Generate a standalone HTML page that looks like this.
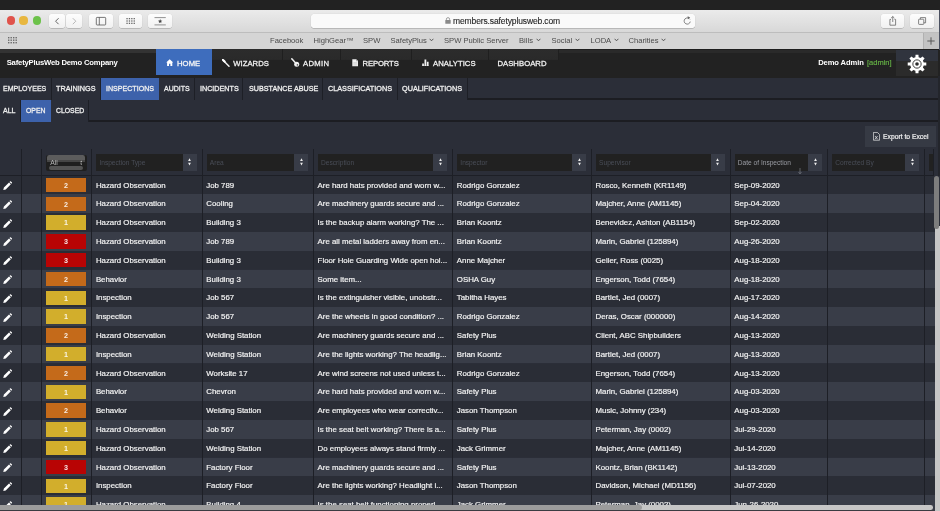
<!DOCTYPE html><html><head><meta charset="utf-8"><title>Inspections</title><style>
*{box-sizing:border-box;margin:0;padding:0}
html,body{width:940px;height:511px;overflow:hidden;background:#2b2e38}
body{position:relative;will-change:transform;font-family:"Liberation Sans",sans-serif;font-size:8px;color:#fff}
.a{position:absolute}
.t{position:absolute;white-space:nowrap;line-height:10px;height:10px}
#top{left:0;top:0;width:940px;height:9.5px;background:#222}
#tb{left:0;top:9.5px;width:940px;height:23px;background:linear-gradient(#ebebeb,#d8d8d8);border-bottom:.5px solid #bdbdbd}
#bm{left:0;top:32.5px;width:940px;height:16.5px;background:#d5d5d5}
.btn{position:absolute;background:linear-gradient(#fdfdfd,#f1f1f1);border-radius:2.5px;box-shadow:0 .5px .5px rgba(0,0,0,.28),0 0 0 .3px rgba(0,0,0,.08)}
.tl{position:absolute;width:8.2px;height:8.2px;border-radius:50%;top:16.4px}
.bk{position:absolute;top:35.5px;font-size:7.6px;color:#4a4a4a;white-space:nowrap;line-height:10px}
#hd{left:0;top:49px;width:940px;height:28.5px;background:#222}
.ht{position:absolute;top:49px;height:26.3px;background:linear-gradient(#2c2c2c 0,#2a2a2a 10.3px,#222 11.5px)}
.hx{position:absolute;top:58.6px;font-size:7.7px;letter-spacing:.05px;color:#f2f2f2;white-space:nowrap;line-height:10px;-webkit-text-stroke:.28px #f2f2f2}
.n2{position:absolute;top:77.8px;height:21.8px;border-right:1px solid #1d1f26;background:#2b2e38}
.n2 span,.n3 span{position:absolute;top:6.4px;font-size:7.6px;line-height:10px;white-space:nowrap;color:#f0f0f0;-webkit-text-stroke:.3px #f0f0f0;transform:scaleX(.928);transform-origin:0 50%}
.n3{position:absolute;top:100.2px;height:21.5px;border-right:1px solid #1d1f26;background:#2b2e38}
.act{background:#3d62ab;border-right-color:#3d62ab}
.ln{position:absolute;background:#1d1f26}
.row{position:absolute;left:0;width:935px;height:18.8px}
.c{position:absolute;white-space:nowrap;font-size:7.85px;line-height:10px;margin-top:.9px;color:#f4f4f4;-webkit-text-stroke:.18px #f4f4f4}
.bd{position:absolute;left:45.9px;width:40.3px;height:14.4px;text-align:center;font-weight:bold;font-size:7.2px;line-height:15.2px;color:rgba(255,255,255,.88)}
.in{position:absolute;top:153.8px;height:16.8px;background:#212121}
.sb{position:absolute;top:153.8px;height:16.8px;width:14.2px;background:#383c47}
.ph{position:absolute;top:157.6px;font-size:6.6px;line-height:10px;color:#494d57;white-space:nowrap}
</style></head><body>
<div id="top" class="a"></div><div id="tb" class="a"></div><div id="bm" class="a"></div>
<div class="tl" style="left:6.5px;background:#e0534b"></div>
<div class="tl" style="left:19.4px;background:#e8b740"></div>
<div class="tl" style="left:32.5px;background:#6cc24a"></div>
<div class="btn" style="left:49px;top:13.6px;width:16.2px;height:14.4px"><svg class="a" style="left:0;top:0" width="16.2" height="14.4" viewBox="0 0 16.2 14.4"><path d="M9.6 4.2 L6.6 7.2 L9.6 10.2" fill="none" stroke="#555" stroke-width="0.9"/></svg></div>
<div class="btn" style="left:66px;top:13.6px;width:16.2px;height:14.4px"><svg class="a" style="left:0;top:0" width="16.2" height="14.4" viewBox="0 0 16.2 14.4"><path d="M6.8 4.2 L9.8 7.2 L6.8 10.2" fill="none" stroke="#b0b0b0" stroke-width="0.9"/></svg></div>
<div class="btn" style="left:89px;top:13.6px;width:24px;height:14.4px"><svg class="a" style="left:0;top:0" width="24" height="14.4" viewBox="0 0 24 14.4"><rect x="7.3" y="3.4" width="9.4" height="7.6" rx="0.8" fill="none" stroke="#555" stroke-width="0.8"/><path d="M10.3 3.4V11" stroke="#555" stroke-width="0.8"/></svg></div>
<div class="btn" style="left:118.7px;top:13.6px;width:23.6px;height:14.4px"><svg class="a" style="left:0;top:0" width="23.6" height="14.4" viewBox="0 0 23.6 14.4"><rect x="7.4" y="4.0" width="1.3" height="1.3" fill="#666"/><rect x="7.4" y="6.35" width="1.3" height="1.3" fill="#666"/><rect x="7.4" y="8.7" width="1.3" height="1.3" fill="#666"/><rect x="9.8" y="4.0" width="1.3" height="1.3" fill="#666"/><rect x="9.8" y="6.35" width="1.3" height="1.3" fill="#666"/><rect x="9.8" y="8.7" width="1.3" height="1.3" fill="#666"/><rect x="12.2" y="4.0" width="1.3" height="1.3" fill="#666"/><rect x="12.2" y="6.35" width="1.3" height="1.3" fill="#666"/><rect x="12.2" y="8.7" width="1.3" height="1.3" fill="#666"/><rect x="14.6" y="4.0" width="1.3" height="1.3" fill="#666"/><rect x="14.6" y="6.35" width="1.3" height="1.3" fill="#666"/><rect x="14.6" y="8.7" width="1.3" height="1.3" fill="#666"/></svg></div>
<div class="btn" style="left:147.7px;top:13.6px;width:24.3px;height:14.4px"><svg class="a" style="left:0;top:0" width="24.3" height="14.4" viewBox="0 0 24.3 14.4"><path d="M6.5 3.6H17.8M6.5 10.9H17.8" stroke="#666" stroke-width="0.7"/><polygon points="12.15,5.05 12.71,6.58 14.34,6.64 13.05,7.64 13.50,9.21 12.15,8.30 10.80,9.21 11.25,7.64 9.96,6.64 11.59,6.58" fill="#444"/></svg></div>
<div class="btn" style="left:311.3px;top:13.8px;width:383.7px;height:14.2px;background:#fafafa"></div>
<svg class="a" style="left:444.5px;top:17.4px" width="6" height="7" viewBox="0 0 6 7"><rect x="0.3" y="3" width="5.4" height="3.8" rx="0.5" fill="#8a8a8a"/><path d="M1.4 3.2V2.2a1.6 1.6 0 0 1 3.2 0V3.2" fill="none" stroke="#8a8a8a" stroke-width="0.8"/></svg>
<div class="t" style="left:453px;top:15.6px;font-size:8.5px;color:#262626;letter-spacing:-.12px;-webkit-text-stroke:.12px #262626">members.safetyplusweb.com</div>
<svg class="a" style="left:683.3px;top:16.3px" width="8.4" height="8.8" viewBox="0 0 8.4 8.8"><path d="M6.9 3.4A3.1 3.1 0 1 0 7.3 5.6" fill="none" stroke="#666" stroke-width="0.8"/><path d="M4.6 0.2 L7.2 1.5 L4.9 3.3Z" fill="#666"/></svg>
<div class="btn" style="left:880.8px;top:13.8px;width:23.5px;height:13.8px"><svg class="a" style="left:0;top:0" width="23.5" height="13.8" viewBox="0 0 23.5 13.8"><path d="M10 5.4H8.9V11.2H14.6V5.4H13.5" fill="none" stroke="#666" stroke-width="0.8"/><path d="M11.75 8V2.6M10.1 4.1L11.75 2.5L13.4 4.1" fill="none" stroke="#666" stroke-width="0.8"/></svg></div>
<div class="btn" style="left:910px;top:13.8px;width:23.8px;height:13.8px"><svg class="a" style="left:0;top:0" width="23.8" height="13.8" viewBox="0 0 23.8 13.8"><rect x="8.6" y="5.2" width="5.2" height="5.2" rx="0.6" fill="none" stroke="#666" stroke-width="0.8"/><path d="M10.4 5.2V3.6H15.6V8.8H13.8" fill="none" stroke="#666" stroke-width="0.8"/></svg></div>
<svg class="a" style="left:7.6px;top:37.2px" width="10" height="7" viewBox="0 0 10 7"><rect x="0.0" y="0.0" width="1.4" height="1.4" fill="#6a6a6a"/><rect x="0.0" y="2.5" width="1.4" height="1.4" fill="#6a6a6a"/><rect x="0.0" y="5.0" width="1.4" height="1.4" fill="#6a6a6a"/><rect x="2.5" y="0.0" width="1.4" height="1.4" fill="#6a6a6a"/><rect x="2.5" y="2.5" width="1.4" height="1.4" fill="#6a6a6a"/><rect x="2.5" y="5.0" width="1.4" height="1.4" fill="#6a6a6a"/><rect x="5.0" y="0.0" width="1.4" height="1.4" fill="#6a6a6a"/><rect x="5.0" y="2.5" width="1.4" height="1.4" fill="#6a6a6a"/><rect x="5.0" y="5.0" width="1.4" height="1.4" fill="#6a6a6a"/><rect x="7.5" y="0.0" width="1.4" height="1.4" fill="#6a6a6a"/><rect x="7.5" y="2.5" width="1.4" height="1.4" fill="#6a6a6a"/><rect x="7.5" y="5.0" width="1.4" height="1.4" fill="#6a6a6a"/></svg>
<div class="bk" style="left:270px">Facebook</div>
<div class="bk" style="left:313.5px">HighGear™</div>
<div class="bk" style="left:363px">SPW</div>
<div class="bk" style="left:390.5px">SafetyPlus<svg width="5" height="4" viewBox="0 0 5 4" style="margin-left:2.6px;vertical-align:0.6px"><path d="M0.6 0.8L2.5 2.8L4.4 0.8" fill="none" stroke="#4a4a4a" stroke-width="0.9"/></svg></div>
<div class="bk" style="left:444px">SPW Public Server</div>
<div class="bk" style="left:519px">Bills<svg width="5" height="4" viewBox="0 0 5 4" style="margin-left:2.6px;vertical-align:0.6px"><path d="M0.6 0.8L2.5 2.8L4.4 0.8" fill="none" stroke="#4a4a4a" stroke-width="0.9"/></svg></div>
<div class="bk" style="left:551.5px">Social<svg width="5" height="4" viewBox="0 0 5 4" style="margin-left:2.6px;vertical-align:0.6px"><path d="M0.6 0.8L2.5 2.8L4.4 0.8" fill="none" stroke="#4a4a4a" stroke-width="0.9"/></svg></div>
<div class="bk" style="left:590.5px">LODA<svg width="5" height="4" viewBox="0 0 5 4" style="margin-left:2.6px;vertical-align:0.6px"><path d="M0.6 0.8L2.5 2.8L4.4 0.8" fill="none" stroke="#4a4a4a" stroke-width="0.9"/></svg></div>
<div class="bk" style="left:628.5px">Charities<svg width="5" height="4" viewBox="0 0 5 4" style="margin-left:2.6px;vertical-align:0.6px"><path d="M0.6 0.8L2.5 2.8L4.4 0.8" fill="none" stroke="#4a4a4a" stroke-width="0.9"/></svg></div>
<div class="a" style="left:923.4px;top:32.8px;width:16.6px;height:16.2px;background:#c3c3c3;border-left:.5px solid #b0b0b0"></div>
<svg class="a" style="left:927.2px;top:37.2px" width="8" height="8" viewBox="0 0 8 8"><path d="M4 0.3V7.7M0.3 4H7.7" stroke="#555" stroke-width="0.95"/></svg>
<div id="hd" class="a"></div>
<div class="a" style="left:0;top:49px;width:155.6px;height:3.6px;background:#333"></div>
<div class="ht" style="left:212px;width:70.5px;"></div><div class="a" style="left:281.5px;top:49px;width:1.2px;height:10.5px;background:#1f1f1f"></div>
<div class="ht" style="left:282.5px;width:58.5px;"></div><div class="a" style="left:340px;top:49px;width:1.2px;height:10.5px;background:#1f1f1f"></div>
<div class="ht" style="left:341px;width:70.5px;"></div><div class="a" style="left:410.5px;top:49px;width:1.2px;height:10.5px;background:#1f1f1f"></div>
<div class="ht" style="left:411.5px;width:77.30000000000001px;"></div><div class="a" style="left:487.8px;top:49px;width:1.2px;height:10.5px;background:#1f1f1f"></div>
<div class="ht" style="left:488.8px;width:69.99999999999994px;"></div><div class="a" style="left:557.8px;top:49px;width:1.2px;height:10.5px;background:#1f1f1f"></div>
<div class="a" style="left:155.6px;top:49px;width:56.4px;height:26.3px;background:#3e6dbd"></div>
<div class="t" style="left:6.7px;top:57.6px;font-weight:bold;font-size:7.7px;letter-spacing:-.2px;color:#fff">SafetyPlusWeb Demo Company</div>
<svg class="a" style="left:165.6px;top:58.8px" width="7.4" height="7.4" viewBox="0 0 7.4 7.4"><path d="M3.7 0.2L0.2 3.5H1.1V7.2H3V4.8H4.4V7.2H6.3V3.5H7.2Z" fill="#fff"/></svg>
<div class="hx" style="left:177px;color:#fff">HOME</div>
<svg class="a" style="left:221.8px;top:58.6px" width="8" height="8" viewBox="0 0 8 8"><path d="M1.6 1.8L7 7.2" stroke="#f2f2f2" stroke-width="1.5" stroke-linecap="round"/><path d="M0.6 0.6L2.6 2.6" stroke="#fff" stroke-width="2.1" stroke-linecap="round"/></svg>
<div class="hx" style="left:233.2px">WIZARDS</div>
<svg class="a" style="left:291px;top:58.2px" width="9" height="9" viewBox="0 0 9 9"><circle cx="5.7" cy="6.2" r="2.5" fill="#f2f2f2"/><circle cx="6.4" cy="6.9" r="0.8" fill="#555"/><path d="M0.8 0.8L4.6 5" stroke="#f2f2f2" stroke-width="1.5" stroke-linecap="round"/></svg>
<div class="hx" style="left:303px;letter-spacing:.3px">ADMIN</div>
<svg class="a" style="left:351.8px;top:59px" width="6.6" height="7.5" viewBox="0 0 7 8"><path d="M0.3 0.2H4.4L6.7 2.5V7.8H0.3Z" fill="#f2f2f2"/><path d="M1.4 3.8H5.6M1.4 5.1H5.6M1.4 6.4H5.6" stroke="#bbb" stroke-width="0.5"/><path d="M4.4 0.2V2.5H6.7" fill="#aaa"/></svg>
<div class="hx" style="left:362.5px;letter-spacing:-.12px">REPORTS</div>
<svg class="a" style="left:422px;top:59px" width="7.2" height="7.2" viewBox="0 0 7.2 7.2"><path d="M0.2 4.4H1.9V7H0.2ZM2.5 0.4H4.3V7H2.5ZM4.9 2.8H6.6V7H4.9Z" fill="#f2f2f2"/><path d="M0 7H7.2" stroke="#f2f2f2" stroke-width="0.5"/></svg>
<div class="hx" style="left:433px">ANALYTICS</div>
<div class="hx" style="left:497.4px">DASHBOARD</div>
<div class="t" style="left:818.2px;top:57.6px;font-weight:bold;font-size:7.6px;letter-spacing:-.1px;color:#fff">Demo Admin</div>
<div class="t" style="left:867px;top:57.6px;font-size:7.5px;color:#66b346;-webkit-text-stroke:.15px #66b346">[admin]</div>
<div class="a" style="left:559px;top:49.8px;width:337px;height:3.5px;background:#2a2a2a"></div>
<div class="a" style="left:895.9px;top:50px;width:42px;height:25.6px;background:linear-gradient(#30343e 0,#30343e 11.3px,#2b2b2b 11.4px)"></div>
<div class="a" style="left:559px;top:49px;width:381px;height:1px;background:#1e1e1e"></div>
<svg class="a" style="left:906.8px;top:53.6px" width="20" height="20" viewBox="0 0 20 20"><path d="M8.53 0.72L11.47 0.72L11.61 3.29L13.61 4.12L15.53 2.40L17.60 4.47L15.88 6.39L16.71 8.39L19.28 8.53L19.28 11.47L16.71 11.61L15.88 13.61L17.60 15.53L15.53 17.60L13.61 15.88L11.61 16.71L11.47 19.28L8.53 19.28L8.39 16.71L6.39 15.88L4.47 17.60L2.40 15.53L4.12 13.61L3.29 11.61L0.72 11.47L0.72 8.53L3.29 8.39L4.12 6.39L2.40 4.47L4.47 2.40L6.39 4.12L8.39 3.29Z" fill="#fff"/><circle cx="10" cy="10" r="4.15" fill="none" stroke="#2b2b2b" stroke-width="0.9"/><circle cx="10" cy="10" r="1.8" fill="#2b2b2b"/></svg>
<div class="ln" style="left:0;top:97.7px;width:940px;height:1.9px;background:#1c1d22"></div>
<div class="n2" style="left:0px;width:51.5px"><span style="left:3px;transform:scaleX(0.923)">EMPLOYEES</span></div>
<div class="n2" style="left:51.5px;width:49.0px"><span style="left:4.700000000000003px;transform:scaleX(0.955)">TRAININGS</span></div>
<div class="n2 act" style="left:100.5px;width:58.80000000000001px"><span style="left:5.200000000000003px;transform:scaleX(0.932)">INSPECTIONS</span></div>
<div class="n2" style="left:159.3px;width:35.89999999999998px"><span style="left:4.899999999999977px;transform:scaleX(0.923)">AUDITS</span></div>
<div class="n2" style="left:195.2px;width:48.0px"><span style="left:4.800000000000011px;transform:scaleX(0.946)">INCIDENTS</span></div>
<div class="n2" style="left:243.2px;width:80.0px"><span style="left:5.5px;transform:scaleX(0.945)">SUBSTANCE ABUSE</span></div>
<div class="n2" style="left:323.2px;width:74.40000000000003px"><span style="left:4.800000000000011px;transform:scaleX(0.956)">CLASSIFICATIONS</span></div>
<div class="n2" style="left:397.6px;width:70.09999999999997px"><span style="left:4.399999999999977px;transform:scaleX(0.957)">QUALIFICATIONS</span></div>
<div class="ln" style="left:88.8px;top:119.7px;width:851.2px;height:1.9px;background:#1c1d22"></div>
<div class="n3" style="left:0px;width:20.8px"><span style="left:3px;top:5.9px;transform:scaleX(0.928)">ALL</span></div>
<div class="n3 act" style="left:20.8px;width:30.2px"><span style="left:5.199999999999999px;top:5.9px;transform:scaleX(0.905)">OPEN</span></div>
<div class="n3" style="left:51px;width:37.900000000000006px"><span style="left:4.5px;top:5.9px;transform:scaleX(0.904)">CLOSED</span></div>
<div class="a" style="left:865.2px;top:126.3px;width:70.7px;height:21.2px;background:#363a44"></div>
<svg class="a" style="left:872.6px;top:132.4px" width="7" height="8.6" viewBox="0 0 7 8.6"><path d="M0.4 0.4H4.4L6.6 2.6V8.2H0.4Z" fill="none" stroke="#f0f0f0" stroke-width="0.7"/><path d="M2 4L4.6 7.2M4.6 4L2 7.2" stroke="#f0f0f0" stroke-width="0.7"/></svg>
<div class="t" style="left:882.6px;top:131.5px;font-size:7.35px;-webkit-text-stroke:.2px #f4f4f4;transform:scaleX(.92);transform-origin:0 50%;color:#f4f4f4">Export to Excel</div>
<div class="row" style="top:175.5px;background:#2a2d36">
<svg class="a" style="left:3px;top:5.6px" width="9.3" height="9.3" viewBox="0 0 10.2 10.2"><path d="M0.3 9.9L1 7.2L6.6 1.6L8.6 3.6L3 9.2Z M7.2 1L7.9 0.4Q8.3 0.1 8.7 0.5L9.7 1.5Q10.1 1.9 9.8 2.3L9.2 3Z" fill="#fff"/></svg>
<div class="bd" style="top:2.4px;background:#c46a1a">2</div>
<div class="c" style="left:95.9px;top:4.3px">Hazard Observation</div>
<div class="c" style="left:206.3px;top:4.3px">Job 789</div>
<div class="c" style="left:317.6px;top:4.3px">Are hard hats provided and worn w...</div>
<div class="c" style="left:456.8px;top:4.3px">Rodrigo Gonzalez</div>
<div class="c" style="left:595.5px;top:4.3px">Rosco, Kenneth (KR1149)</div>
<div class="c" style="left:734.3px;top:4.3px">Sep-09-2020</div>
</div>
<div class="row" style="top:194.3px;background:#393d48">
<svg class="a" style="left:3px;top:5.6px" width="9.3" height="9.3" viewBox="0 0 10.2 10.2"><path d="M0.3 9.9L1 7.2L6.6 1.6L8.6 3.6L3 9.2Z M7.2 1L7.9 0.4Q8.3 0.1 8.7 0.5L9.7 1.5Q10.1 1.9 9.8 2.3L9.2 3Z" fill="#fff"/></svg>
<div class="bd" style="top:2.4px;background:#c46a1a">2</div>
<div class="c" style="left:95.9px;top:4.3px">Hazard Observation</div>
<div class="c" style="left:206.3px;top:4.3px">Cooling</div>
<div class="c" style="left:317.6px;top:4.3px">Are machinery guards secure and ...</div>
<div class="c" style="left:456.8px;top:4.3px">Rodrigo Gonzalez</div>
<div class="c" style="left:595.5px;top:4.3px">Majcher, Anne (AM1145)</div>
<div class="c" style="left:734.3px;top:4.3px">Sep-04-2020</div>
</div>
<div class="row" style="top:213.1px;background:#2a2d36">
<svg class="a" style="left:3px;top:5.6px" width="9.3" height="9.3" viewBox="0 0 10.2 10.2"><path d="M0.3 9.9L1 7.2L6.6 1.6L8.6 3.6L3 9.2Z M7.2 1L7.9 0.4Q8.3 0.1 8.7 0.5L9.7 1.5Q10.1 1.9 9.8 2.3L9.2 3Z" fill="#fff"/></svg>
<div class="bd" style="top:2.4px;background:#d2ae2c">1</div>
<div class="c" style="left:95.9px;top:4.3px">Hazard Observation</div>
<div class="c" style="left:206.3px;top:4.3px">Building 3</div>
<div class="c" style="left:317.6px;top:4.3px">Is the backup alarm working? The ...</div>
<div class="c" style="left:456.8px;top:4.3px">Brian Koontz</div>
<div class="c" style="left:595.5px;top:4.3px">Benevidez, Ashton (AB1154)</div>
<div class="c" style="left:734.3px;top:4.3px">Sep-02-2020</div>
</div>
<div class="row" style="top:231.9px;background:#393d48">
<svg class="a" style="left:3px;top:5.6px" width="9.3" height="9.3" viewBox="0 0 10.2 10.2"><path d="M0.3 9.9L1 7.2L6.6 1.6L8.6 3.6L3 9.2Z M7.2 1L7.9 0.4Q8.3 0.1 8.7 0.5L9.7 1.5Q10.1 1.9 9.8 2.3L9.2 3Z" fill="#fff"/></svg>
<div class="bd" style="top:2.4px;background:#b80404">3</div>
<div class="c" style="left:95.9px;top:4.3px">Hazard Observation</div>
<div class="c" style="left:206.3px;top:4.3px">Job 789</div>
<div class="c" style="left:317.6px;top:4.3px">Are all metal ladders away from en...</div>
<div class="c" style="left:456.8px;top:4.3px">Brian Koontz</div>
<div class="c" style="left:595.5px;top:4.3px">Marin, Gabriel (125894)</div>
<div class="c" style="left:734.3px;top:4.3px">Aug-26-2020</div>
</div>
<div class="row" style="top:250.7px;background:#2a2d36">
<svg class="a" style="left:3px;top:5.6px" width="9.3" height="9.3" viewBox="0 0 10.2 10.2"><path d="M0.3 9.9L1 7.2L6.6 1.6L8.6 3.6L3 9.2Z M7.2 1L7.9 0.4Q8.3 0.1 8.7 0.5L9.7 1.5Q10.1 1.9 9.8 2.3L9.2 3Z" fill="#fff"/></svg>
<div class="bd" style="top:2.4px;background:#b80404">3</div>
<div class="c" style="left:95.9px;top:4.3px">Hazard Observation</div>
<div class="c" style="left:206.3px;top:4.3px">Building 3</div>
<div class="c" style="left:317.6px;top:4.3px">Floor Hole Guarding Wide open hol...</div>
<div class="c" style="left:456.8px;top:4.3px">Anne Majcher</div>
<div class="c" style="left:595.5px;top:4.3px">Geller, Ross (0025)</div>
<div class="c" style="left:734.3px;top:4.3px">Aug-18-2020</div>
</div>
<div class="row" style="top:269.5px;background:#393d48">
<svg class="a" style="left:3px;top:5.6px" width="9.3" height="9.3" viewBox="0 0 10.2 10.2"><path d="M0.3 9.9L1 7.2L6.6 1.6L8.6 3.6L3 9.2Z M7.2 1L7.9 0.4Q8.3 0.1 8.7 0.5L9.7 1.5Q10.1 1.9 9.8 2.3L9.2 3Z" fill="#fff"/></svg>
<div class="bd" style="top:2.4px;background:#c46a1a">2</div>
<div class="c" style="left:95.9px;top:4.3px">Behavior</div>
<div class="c" style="left:206.3px;top:4.3px">Building 3</div>
<div class="c" style="left:317.6px;top:4.3px">Some item...</div>
<div class="c" style="left:456.8px;top:4.3px">OSHA Guy</div>
<div class="c" style="left:595.5px;top:4.3px">Engerson, Todd (7654)</div>
<div class="c" style="left:734.3px;top:4.3px">Aug-18-2020</div>
</div>
<div class="row" style="top:288.3px;background:#2a2d36">
<svg class="a" style="left:3px;top:5.6px" width="9.3" height="9.3" viewBox="0 0 10.2 10.2"><path d="M0.3 9.9L1 7.2L6.6 1.6L8.6 3.6L3 9.2Z M7.2 1L7.9 0.4Q8.3 0.1 8.7 0.5L9.7 1.5Q10.1 1.9 9.8 2.3L9.2 3Z" fill="#fff"/></svg>
<div class="bd" style="top:2.4px;background:#d2ae2c">1</div>
<div class="c" style="left:95.9px;top:4.3px">Inspection</div>
<div class="c" style="left:206.3px;top:4.3px">Job 567</div>
<div class="c" style="left:317.6px;top:4.3px">Is the extinguisher visible, unobstr...</div>
<div class="c" style="left:456.8px;top:4.3px">Tabitha Hayes</div>
<div class="c" style="left:595.5px;top:4.3px">Bartlet, Jed (0007)</div>
<div class="c" style="left:734.3px;top:4.3px">Aug-17-2020</div>
</div>
<div class="row" style="top:307.1px;background:#393d48">
<svg class="a" style="left:3px;top:5.6px" width="9.3" height="9.3" viewBox="0 0 10.2 10.2"><path d="M0.3 9.9L1 7.2L6.6 1.6L8.6 3.6L3 9.2Z M7.2 1L7.9 0.4Q8.3 0.1 8.7 0.5L9.7 1.5Q10.1 1.9 9.8 2.3L9.2 3Z" fill="#fff"/></svg>
<div class="bd" style="top:2.4px;background:#d2ae2c">1</div>
<div class="c" style="left:95.9px;top:4.3px">Inspection</div>
<div class="c" style="left:206.3px;top:4.3px">Job 567</div>
<div class="c" style="left:317.6px;top:4.3px">Are the wheels in good condition? ...</div>
<div class="c" style="left:456.8px;top:4.3px">Rodrigo Gonzalez</div>
<div class="c" style="left:595.5px;top:4.3px">Deras, Oscar (000000)</div>
<div class="c" style="left:734.3px;top:4.3px">Aug-14-2020</div>
</div>
<div class="row" style="top:325.9px;background:#2a2d36">
<svg class="a" style="left:3px;top:5.6px" width="9.3" height="9.3" viewBox="0 0 10.2 10.2"><path d="M0.3 9.9L1 7.2L6.6 1.6L8.6 3.6L3 9.2Z M7.2 1L7.9 0.4Q8.3 0.1 8.7 0.5L9.7 1.5Q10.1 1.9 9.8 2.3L9.2 3Z" fill="#fff"/></svg>
<div class="bd" style="top:2.4px;background:#c46a1a">2</div>
<div class="c" style="left:95.9px;top:4.3px">Hazard Observation</div>
<div class="c" style="left:206.3px;top:4.3px">Welding Station</div>
<div class="c" style="left:317.6px;top:4.3px">Are machinery guards secure and ...</div>
<div class="c" style="left:456.8px;top:4.3px">Safety Plus</div>
<div class="c" style="left:595.5px;top:4.3px">Client, ABC Shipbuilders</div>
<div class="c" style="left:734.3px;top:4.3px">Aug-13-2020</div>
</div>
<div class="row" style="top:344.7px;background:#393d48">
<svg class="a" style="left:3px;top:5.6px" width="9.3" height="9.3" viewBox="0 0 10.2 10.2"><path d="M0.3 9.9L1 7.2L6.6 1.6L8.6 3.6L3 9.2Z M7.2 1L7.9 0.4Q8.3 0.1 8.7 0.5L9.7 1.5Q10.1 1.9 9.8 2.3L9.2 3Z" fill="#fff"/></svg>
<div class="bd" style="top:2.4px;background:#d2ae2c">1</div>
<div class="c" style="left:95.9px;top:4.3px">Inspection</div>
<div class="c" style="left:206.3px;top:4.3px">Welding Station</div>
<div class="c" style="left:317.6px;top:4.3px">Are the lights working? The headlig...</div>
<div class="c" style="left:456.8px;top:4.3px">Brian Koontz</div>
<div class="c" style="left:595.5px;top:4.3px">Bartlet, Jed (0007)</div>
<div class="c" style="left:734.3px;top:4.3px">Aug-13-2020</div>
</div>
<div class="row" style="top:363.5px;background:#2a2d36">
<svg class="a" style="left:3px;top:5.6px" width="9.3" height="9.3" viewBox="0 0 10.2 10.2"><path d="M0.3 9.9L1 7.2L6.6 1.6L8.6 3.6L3 9.2Z M7.2 1L7.9 0.4Q8.3 0.1 8.7 0.5L9.7 1.5Q10.1 1.9 9.8 2.3L9.2 3Z" fill="#fff"/></svg>
<div class="bd" style="top:2.4px;background:#c46a1a">2</div>
<div class="c" style="left:95.9px;top:4.3px">Hazard Observation</div>
<div class="c" style="left:206.3px;top:4.3px">Worksite 17</div>
<div class="c" style="left:317.6px;top:4.3px">Are wind screens not used unless t...</div>
<div class="c" style="left:456.8px;top:4.3px">Rodrigo Gonzalez</div>
<div class="c" style="left:595.5px;top:4.3px">Engerson, Todd (7654)</div>
<div class="c" style="left:734.3px;top:4.3px">Aug-13-2020</div>
</div>
<div class="row" style="top:382.3px;background:#393d48">
<svg class="a" style="left:3px;top:5.6px" width="9.3" height="9.3" viewBox="0 0 10.2 10.2"><path d="M0.3 9.9L1 7.2L6.6 1.6L8.6 3.6L3 9.2Z M7.2 1L7.9 0.4Q8.3 0.1 8.7 0.5L9.7 1.5Q10.1 1.9 9.8 2.3L9.2 3Z" fill="#fff"/></svg>
<div class="bd" style="top:2.4px;background:#d2ae2c">1</div>
<div class="c" style="left:95.9px;top:4.3px">Behavior</div>
<div class="c" style="left:206.3px;top:4.3px">Chevron</div>
<div class="c" style="left:317.6px;top:4.3px">Are hard hats provided and worn w...</div>
<div class="c" style="left:456.8px;top:4.3px">Safety Plus</div>
<div class="c" style="left:595.5px;top:4.3px">Marin, Gabriel (125894)</div>
<div class="c" style="left:734.3px;top:4.3px">Aug-03-2020</div>
</div>
<div class="row" style="top:401.1px;background:#2a2d36">
<svg class="a" style="left:3px;top:5.6px" width="9.3" height="9.3" viewBox="0 0 10.2 10.2"><path d="M0.3 9.9L1 7.2L6.6 1.6L8.6 3.6L3 9.2Z M7.2 1L7.9 0.4Q8.3 0.1 8.7 0.5L9.7 1.5Q10.1 1.9 9.8 2.3L9.2 3Z" fill="#fff"/></svg>
<div class="bd" style="top:2.4px;background:#c46a1a">2</div>
<div class="c" style="left:95.9px;top:4.3px">Behavior</div>
<div class="c" style="left:206.3px;top:4.3px">Welding Station</div>
<div class="c" style="left:317.6px;top:4.3px">Are employees who wear correctiv...</div>
<div class="c" style="left:456.8px;top:4.3px">Jason Thompson</div>
<div class="c" style="left:595.5px;top:4.3px">Music, Johnny (234)</div>
<div class="c" style="left:734.3px;top:4.3px">Aug-03-2020</div>
</div>
<div class="row" style="top:419.9px;background:#393d48">
<svg class="a" style="left:3px;top:5.6px" width="9.3" height="9.3" viewBox="0 0 10.2 10.2"><path d="M0.3 9.9L1 7.2L6.6 1.6L8.6 3.6L3 9.2Z M7.2 1L7.9 0.4Q8.3 0.1 8.7 0.5L9.7 1.5Q10.1 1.9 9.8 2.3L9.2 3Z" fill="#fff"/></svg>
<div class="bd" style="top:2.4px;background:#d2ae2c">1</div>
<div class="c" style="left:95.9px;top:4.3px">Hazard Observation</div>
<div class="c" style="left:206.3px;top:4.3px">Job 567</div>
<div class="c" style="left:317.6px;top:4.3px">Is the seat belt working? There is a...</div>
<div class="c" style="left:456.8px;top:4.3px">Safety Plus</div>
<div class="c" style="left:595.5px;top:4.3px">Peterman, Jay (0002)</div>
<div class="c" style="left:734.3px;top:4.3px">Jul-29-2020</div>
</div>
<div class="row" style="top:438.7px;background:#2a2d36">
<svg class="a" style="left:3px;top:5.6px" width="9.3" height="9.3" viewBox="0 0 10.2 10.2"><path d="M0.3 9.9L1 7.2L6.6 1.6L8.6 3.6L3 9.2Z M7.2 1L7.9 0.4Q8.3 0.1 8.7 0.5L9.7 1.5Q10.1 1.9 9.8 2.3L9.2 3Z" fill="#fff"/></svg>
<div class="bd" style="top:2.4px;background:#d2ae2c">1</div>
<div class="c" style="left:95.9px;top:4.3px">Hazard Observation</div>
<div class="c" style="left:206.3px;top:4.3px">Welding Station</div>
<div class="c" style="left:317.6px;top:4.3px">Do employees always stand firmly ...</div>
<div class="c" style="left:456.8px;top:4.3px">Jack Grimmer</div>
<div class="c" style="left:595.5px;top:4.3px">Majcher, Anne (AM1145)</div>
<div class="c" style="left:734.3px;top:4.3px">Jul-14-2020</div>
</div>
<div class="row" style="top:457.5px;background:#393d48">
<svg class="a" style="left:3px;top:5.6px" width="9.3" height="9.3" viewBox="0 0 10.2 10.2"><path d="M0.3 9.9L1 7.2L6.6 1.6L8.6 3.6L3 9.2Z M7.2 1L7.9 0.4Q8.3 0.1 8.7 0.5L9.7 1.5Q10.1 1.9 9.8 2.3L9.2 3Z" fill="#fff"/></svg>
<div class="bd" style="top:2.4px;background:#b80404">3</div>
<div class="c" style="left:95.9px;top:4.3px">Hazard Observation</div>
<div class="c" style="left:206.3px;top:4.3px">Factory Floor</div>
<div class="c" style="left:317.6px;top:4.3px">Are machinery guards secure and ...</div>
<div class="c" style="left:456.8px;top:4.3px">Safety Plus</div>
<div class="c" style="left:595.5px;top:4.3px">Koontz, Brian (BK1142)</div>
<div class="c" style="left:734.3px;top:4.3px">Jul-13-2020</div>
</div>
<div class="row" style="top:476.3px;background:#2a2d36">
<svg class="a" style="left:3px;top:5.6px" width="9.3" height="9.3" viewBox="0 0 10.2 10.2"><path d="M0.3 9.9L1 7.2L6.6 1.6L8.6 3.6L3 9.2Z M7.2 1L7.9 0.4Q8.3 0.1 8.7 0.5L9.7 1.5Q10.1 1.9 9.8 2.3L9.2 3Z" fill="#fff"/></svg>
<div class="bd" style="top:2.4px;background:#d2ae2c">1</div>
<div class="c" style="left:95.9px;top:4.3px">Inspection</div>
<div class="c" style="left:206.3px;top:4.3px">Factory Floor</div>
<div class="c" style="left:317.6px;top:4.3px">Are the lights working? Headlight i...</div>
<div class="c" style="left:456.8px;top:4.3px">Jason Thompson</div>
<div class="c" style="left:595.5px;top:4.3px">Davidson, Michael (MD1156)</div>
<div class="c" style="left:734.3px;top:4.3px">Jul-07-2020</div>
</div>
<div class="row" style="top:495.1px;background:#393d48">
<svg class="a" style="left:3px;top:5.6px" width="9.3" height="9.3" viewBox="0 0 10.2 10.2"><path d="M0.3 9.9L1 7.2L6.6 1.6L8.6 3.6L3 9.2Z M7.2 1L7.9 0.4Q8.3 0.1 8.7 0.5L9.7 1.5Q10.1 1.9 9.8 2.3L9.2 3Z" fill="#fff"/></svg>
<div class="bd" style="top:2.4px;background:#d2ae2c">1</div>
<div class="c" style="left:95.9px;top:4.3px">Hazard Observation</div>
<div class="c" style="left:206.3px;top:4.3px">Building 4</div>
<div class="c" style="left:317.6px;top:4.3px">Is the seat belt functioning properl...</div>
<div class="c" style="left:456.8px;top:4.3px">Jack Grimmer</div>
<div class="c" style="left:595.5px;top:4.3px">Peterman, Jay (0002)</div>
<div class="c" style="left:734.3px;top:4.3px">Jun-26-2020</div>
</div>
<div class="ln" style="left:20.80px;top:148.5px;width:1px;height:362.5px"></div>
<div class="ln" style="left:40.70px;top:148.5px;width:1px;height:362.5px"></div>
<div class="ln" style="left:91.10px;top:148.5px;width:1px;height:362.5px"></div>
<div class="ln" style="left:201.50px;top:148.5px;width:1px;height:362.5px"></div>
<div class="ln" style="left:312.75px;top:148.5px;width:1px;height:362.5px"></div>
<div class="ln" style="left:452.00px;top:148.5px;width:1px;height:362.5px"></div>
<div class="ln" style="left:590.75px;top:148.5px;width:1px;height:362.5px"></div>
<div class="ln" style="left:729.50px;top:148.5px;width:1px;height:362.5px"></div>
<div class="ln" style="left:827.00px;top:148.5px;width:1px;height:362.5px"></div>
<div class="ln" style="left:924.00px;top:148.5px;width:1px;height:362.5px"></div>
<div class="ln" style="left:0;top:174.9px;width:934px;height:1.1px"></div>
<div class="a" style="left:46.1px;top:154.7px;width:40.5px;height:16px;border-radius:2px;background:#1f1f1f"></div>
<div class="a" style="left:47px;top:155px;width:38.4px;height:5px;border-radius:2.4px 2.4px 0 0;background:#5c5c5c"></div>
<div class="a" style="left:47px;top:159.6px;width:38.4px;height:2.2px;background:#464646"></div>
<div class="a" style="left:48.9px;top:165.9px;width:33.9px;height:3.8px;border-radius:1.9px;background:#545454"></div>
<div class="t" style="left:50.2px;top:157.7px;font-size:6.8px;color:#b4b4b4">All</div>
<svg class="a" style="left:79.6px;top:159.6px" width="2.6" height="5.6" viewBox="0 0 2.6 5.6"><path d="M0.1 2.2L1.3 0.5L2.5 2.2ZM0.1 3.4L1.3 5.1L2.5 3.4Z" fill="#b4b4b4"/></svg>
<div class="in" style="left:96.2px;width:86.6px"></div><div class="sb" style="left:182.8px"><svg class="a" style="left:5.6px;top:4.7px" width="3" height="7.6" viewBox="0 0 3 7.6"><path d="M0.1 2.9L1.5 0.2L2.9 2.9ZM0.1 4.8L1.5 7.4L2.9 4.8Z" fill="#ececec"/></svg></div>
<div class="ph" style="left:99.4px;color:#494d57">Inspection Type</div>
<div class="in" style="left:206.6px;width:87.5px"></div><div class="sb" style="left:294.1px"><svg class="a" style="left:5.6px;top:4.7px" width="3" height="7.6" viewBox="0 0 3 7.6"><path d="M0.1 2.9L1.5 0.2L2.9 2.9ZM0.1 4.8L1.5 7.4L2.9 4.8Z" fill="#ececec"/></svg></div>
<div class="ph" style="left:209.8px;color:#494d57">Area</div>
<div class="in" style="left:317.9px;width:115.4px"></div><div class="sb" style="left:433.3px"><svg class="a" style="left:5.6px;top:4.7px" width="3" height="7.6" viewBox="0 0 3 7.6"><path d="M0.1 2.9L1.5 0.2L2.9 2.9ZM0.1 4.8L1.5 7.4L2.9 4.8Z" fill="#ececec"/></svg></div>
<div class="ph" style="left:321.1px;color:#494d57">Description</div>
<div class="in" style="left:457.1px;width:114.9px"></div><div class="sb" style="left:572.0px"><svg class="a" style="left:5.6px;top:4.7px" width="3" height="7.6" viewBox="0 0 3 7.6"><path d="M0.1 2.9L1.5 0.2L2.9 2.9ZM0.1 4.8L1.5 7.4L2.9 4.8Z" fill="#ececec"/></svg></div>
<div class="ph" style="left:460.3px;color:#494d57">Inspector</div>
<div class="in" style="left:595.9px;width:114.9px"></div><div class="sb" style="left:710.8px"><svg class="a" style="left:5.6px;top:4.7px" width="3" height="7.6" viewBox="0 0 3 7.6"><path d="M0.1 2.9L1.5 0.2L2.9 2.9ZM0.1 4.8L1.5 7.4L2.9 4.8Z" fill="#ececec"/></svg></div>
<div class="ph" style="left:599.1px;color:#494d57">Supervisor</div>
<div class="in" style="left:734.6px;width:73.7px"></div><div class="sb" style="left:808.3px"><svg class="a" style="left:5.6px;top:4.7px" width="3" height="7.6" viewBox="0 0 3 7.6"><path d="M0.1 2.9L1.5 0.2L2.9 2.9ZM0.1 4.8L1.5 7.4L2.9 4.8Z" fill="#ececec"/></svg></div>
<div class="ph" style="left:737.8px;color:#9a9ca3">Date of Inspection</div>
<div class="in" style="left:832.1px;width:73.2px"></div><div class="sb" style="left:905.3px"><svg class="a" style="left:5.6px;top:4.7px" width="3" height="7.6" viewBox="0 0 3 7.6"><path d="M0.1 2.9L1.5 0.2L2.9 2.9ZM0.1 4.8L1.5 7.4L2.9 4.8Z" fill="#ececec"/></svg></div>
<div class="ph" style="left:835.3px;color:#494d57">Corrected By</div>
<div class="in" style="left:929.2px;width:4.8px"></div>
<svg class="a" style="left:797.6px;top:167.6px" width="4" height="6.6" viewBox="0 0 4 6.6"><path d="M2 0V5.6M0.5 4.2L2 5.8L3.5 4.2" fill="none" stroke="#8a8d95" stroke-width="0.6"/></svg>
<div class="a" style="left:938px;top:75.6px;width:2px;height:100px;background:#23252b"></div>
<div class="ln" style="left:933px;top:148.5px;width:1px;height:27px"></div>
<div class="a" style="left:938.7px;top:9.5px;width:1.3px;height:40px;background:#4a5060"></div>

<div class="a" style="left:935.2px;top:226px;width:4.8px;height:285px;background:#c6c6c6"></div>
<div class="a" style="left:934.4px;top:176px;width:5px;height:52.5px;border-radius:2.5px;background:#7d7d7d"></div>
<div class="a" style="left:0;top:505.2px;width:932.5px;height:4.6px;border-radius:0 2.3px 2.3px 0;background:#c6c6c6"></div>
<div class="a" style="left:0;top:505.2px;width:641.5px;height:4.6px;border-radius:0 2.3px 2.3px 0;background:#9c9c9c"></div>
<div class="a" style="left:0;top:509.8px;width:934px;height:1.2px;background:#3a3c42"></div>
</body></html>
